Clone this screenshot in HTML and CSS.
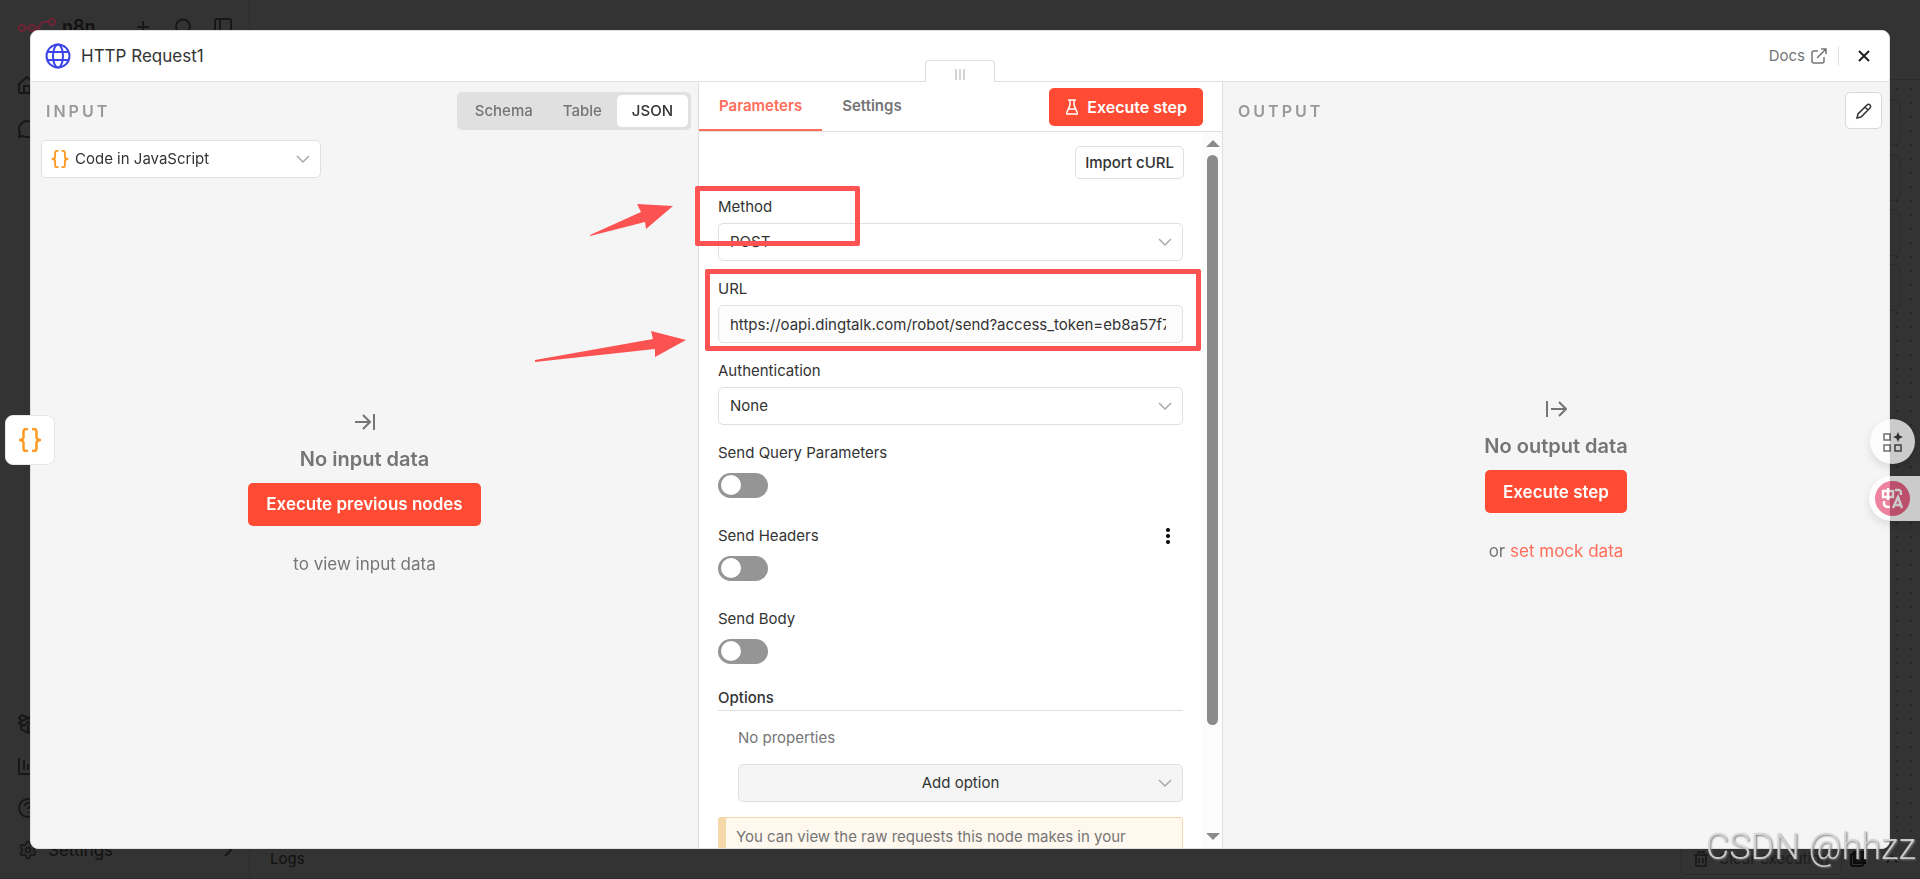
FILE: index.html
```html
<!DOCTYPE html>
<html lang="en">
<head>
    <meta charset="UTF-8">
    <meta name="viewport" content="width=device-width, initial-scale=1.0">
    <title>HTTP Request1 - n8n</title>
    <link rel="stylesheet" href="styles.css">
</head>
<body>

<!-- dimmed editor behind the dialog -->
<div class="editor">
    <aside class="sidebar">
        <div class="brand">
            <svg class="logo" width="40" height="24" viewBox="0 0 40 24">
                <g fill="none" stroke="#6b2438" stroke-width="2">
                    <circle cx="4" cy="13" r="3"/>
                    <circle cx="14" cy="13" r="3"/>
                    <circle cx="34" cy="7" r="3"/>
                    <circle cx="31" cy="19" r="3"/>
                    <path d="M7 13h4M17 13h2c4 0 2-6 7-6h5M19 13c4 0 2 6 7 6h2"/>
                </g>
            </svg>
            <span class="brand-name">n8n</span>
            <svg class="tool" width="18" height="18" viewBox="0 0 18 18"><path d="M9 3v12M3 9h12"/></svg>
            <svg class="tool" width="18" height="18" viewBox="0 0 18 18"><circle cx="9" cy="8.500" r="7"/><path d="M14 14l3 3"/></svg>
            <svg class="tool" width="18" height="18" viewBox="0 0 18 18"><rect x="1" y="1" width="16" height="16" rx="2"/><path d="M6 1v16"/></svg>
        </div>
        <nav class="side-nav">
            <svg class="tool" width="18" height="18" viewBox="0 0 18 18"><path d="M1 8l8-7 8 7v8a1 1 0 0 1-1 1H2a1 1 0 0 1-1-1zM6 17v-7h6v7"/></svg>
            <svg class="tool" width="18" height="18" viewBox="0 0 18 18"><path d="M1 17l1-4a8 8 0 1 1 3 3z"/></svg>
        </nav>
        <nav class="side-nav side-nav-bottom">
            <svg class="tool" width="20" height="20" viewBox="0 0 20 20"><path d="M3 9v6l7 4 7-4V9M10 11v8M10 4L4 1 1 4l3 3-3 2 5 3 4-4 4 4 5-3-3-2 3-3-3-3zM4 7l6-3 6 3"/></svg>
            <svg class="tool" width="20" height="20" viewBox="0 0 20 20"><path d="M1 2v15a1 1 0 0 0 1 1h16M6 4v10M10 8v6M14 5v9"/></svg>
            <svg class="tool" width="20" height="20" viewBox="0 0 20 20"><circle cx="10" cy="10" r="9"/><path d="M7 8c0-4 6-4 6-1 0 2-3 2-3 4M10 14v1"/></svg>
            <a class="side-link" href="#">
                <svg class="tool" width="20" height="20" viewBox="0 0 24 24"><path d="M12.200 2h-.4a2 2 0 0 0-2 2v.2a2 2 0 0 1-1 1.700l-.4.300a2 2 0 0 1-2 0l-.2-.1a2 2 0 0 0-2.700.7l-.2.400a2 2 0 0 0 .7 2.700l.2.100a2 2 0 0 1 1 1.700v.5a2 2 0 0 1-1 1.800l-.2.100a2 2 0 0 0-.7 2.700l.2.400a2 2 0 0 0 2.700.7l.2-.1a2 2 0 0 1 2 0l.4.300a2 2 0 0 1 1 1.700v.2a2 2 0 0 0 2 2h.4a2 2 0 0 0 2-2v-.2a2 2 0 0 1 1-1.700l.4-.3a2 2 0 0 1 2 0l.2.100a2 2 0 0 0 2.700-.7l.2-.4a2 2 0 0 0-.7-2.700l-.2-.1a2 2 0 0 1-1-1.800v-.5a2 2 0 0 1 1-1.700l.2-.1a2 2 0 0 0 .7-2.700l-.2-.4a2 2 0 0 0-2.700-.7l-.2.100a2 2 0 0 1-2 0l-.4-.3a2 2 0 0 1-1-1.700V4a2 2 0 0 0-2-2z"/><circle cx="12" cy="12" r="3"/></svg>
                <span>Settings</span>
                <svg class="tool side-arrow" width="8" height="16" viewBox="0 0 8 16"><path d="M1 2l6 6-6 6"/></svg>
            </a>
        </nav>
    </aside>
    <main class="workspace">
        <div class="top-bar"></div>
        <div class="canvas">
            <div class="canvas-tools">
                <span></span><span></span><span></span><span></span>
            </div>
        </div>
        <div class="log-bar">
            <span class="log-title">Logs</span>
            <button type="button" class="clear-btn">
                <svg width="14" height="16" viewBox="0 0 14 16"><path d="M0 4h14M2 4v10a1 1 0 0 0 1 1h8a1 1 0 0 0 1-1V4M4 4V1h6v3M5 7v5M9 7v5"/></svg>
                Clear execution
            </button>
            <svg class="tool dark" width="16" height="16" viewBox="0 0 16 16"><rect x="1" y="3" width="12" height="12" rx="2"/><path class="solid" d="M4 1h9a2 2 0 0 1 2 2v9H4z"/></svg>
            <svg class="tool dark" width="12" height="12" viewBox="0 0 12 12"><path d="M1 9l5-5 5 5"/></svg>
        </div>
    </main>
</div>

<div class="modal">
    <header class="modal-header">
        <svg class="globe" width="26" height="26" viewBox="0 0 26 26"><circle cx="13" cy="13" r="11.500"/><ellipse cx="13" cy="13" rx="5" ry="11.500"/><path d="M2 9h22M2 17h22"/></svg>
        <h1>HTTP Request1</h1>
        <a class="docs" href="#">Docs
            <svg width="16" height="16" viewBox="0 0 16 16"><path d="M7 3H3a2 2 0 0 0-2 2v8a2 2 0 0 0 2 2h8a2 2 0 0 0 2-2V9M10 1h5v5M15 1L6 10"/></svg>
        </a>
        <button type="button" class="close" aria-label="Close">
            <svg width="12" height="12" viewBox="0 0 12 12"><path d="M1 1l10 10M11 1L1 11"/></svg>
        </button>
    </header>

    <section class="panel">
        <div class="panel-header">
            <h2>Input</h2>
            <div class="view-tabs">
                <button type="button">Schema</button>
                <button type="button">Table</button>
                <button type="button" class="active">JSON</button>
            </div>
        </div>
        <div class="select node-select">
            <svg class="braces" width="18" height="18" viewBox="0 0 24 24"><path d="M10 1H8a2.500 2.500 0 0 0-2.500 2.500V9c0 2-1.500 3-4.500 3 3 0 4.500 1 4.500 3v5.500A2.500 2.500 0 0 0 8 23h2M14 1h2a2.500 2.500 0 0 1 2.500 2.500V9c0 2 1.500 3 4.500 3-3 0-4.500 1-4.500 3v5.500A2.500 2.500 0 0 1 16 23h-2"/></svg>
            <select aria-label="Input node"><option>Code in JavaScript</option></select>
            <svg class="chevron" width="14" height="8" viewBox="0 0 14 8"><path d="M1 1l6 6 6-6"/></svg>
        </div>
        <div class="empty">
            <svg class="flow-icon" width="22" height="18" viewBox="0 0 22 18"><path d="M1 9h15M9 2l7 7-7 7M20 1v16"/></svg>
            <h3>No input data</h3>
            <button type="button" class="primary large">Execute previous nodes</button>
            <p>to view input data</p>
        </div>
    </section>

    <section class="params">
        <div class="drag-handle"><i></i><i></i><i></i></div>
        <div class="tabs">
            <button type="button" class="tab active">Parameters</button>
            <button type="button" class="tab">Settings</button>
            <button type="button" class="primary">
                <svg width="12" height="16" viewBox="0 0 12 16"><path d="M2 1h8M4 1v5L1 13a1 1 0 0 0 1 2h8a1 1 0 0 0 1-2L8 6V1M3 10h6"/></svg>
                Execute step
            </button>
        </div>
        <div class="scroll-area">
            <form class="form">
                <button type="button" class="import-btn">Import cURL</button>

                <div class="field">
                    <label for="method">Method</label>
                    <div class="select">
                        <select id="method"><option>POST</option></select>
                        <svg class="chevron" width="14" height="8" viewBox="0 0 14 8"><path d="M1 1l6 6 6-6"/></svg>
                    </div>
                </div>
                <div class="field">
                    <label for="url">URL</label>
                    <input type="text" id="url" value="https://oapi.dingtalk.com/robot/send?access_token=eb8a57f7">
                </div>
                <div class="field">
                    <label for="auth">Authentication</label>
                    <div class="select">
                        <select id="auth"><option>None</option></select>
                        <svg class="chevron" width="14" height="8" viewBox="0 0 14 8"><path d="M1 1l6 6 6-6"/></svg>
                    </div>
                </div>

                <div class="toggle">
                    <label for="sendQuery">Send Query Parameters</label>
                    <input type="checkbox" id="sendQuery">
                </div>
                <div class="toggle">
                    <label for="sendHeaders">Send Headers</label>
                    <button type="button" class="more" aria-label="More">
                        <svg width="6" height="18" viewBox="0 0 6 18"><circle cx="3" cy="3" r="2"/><circle cx="3" cy="9" r="2"/><circle cx="3" cy="15" r="2"/></svg>
                    </button>
                    <input type="checkbox" id="sendHeaders">
                </div>
                <div class="toggle">
                    <label for="sendBody">Send Body</label>
                    <input type="checkbox" id="sendBody">
                </div>

                <h4>Options</h4>
                <div class="options">
                    <p>No properties</p>
                    <div class="select add-option">
                        <select aria-label="Add option"><option>Add option</option></select>
                        <svg class="chevron" width="14" height="8" viewBox="0 0 14 8"><path d="M1 1l6 6 6-6"/></svg>
                    </div>
                </div>
                <div class="notice">You can view the raw requests this node makes in your</div>
            </form>
            <div class="scrollbar">
                <svg width="14" height="7" viewBox="0 0 14 7"><path d="M0 7l7-7 7 7z"/></svg>
                <div class="track"><div class="thumb"></div></div>
                <svg width="14" height="7" viewBox="0 0 14 7"><path d="M0 0l7 7 7-7z"/></svg>
            </div>
        </div>
    </section>

    <section class="panel output">
        <div class="panel-header">
            <h2>Output</h2>
            <button type="button" class="edit" aria-label="Edit output">
                <svg width="16" height="16" viewBox="0 0 16 16"><path d="M1 15l1-4 9-9a2.100 2.100 0 0 1 3 3l-9 9zM9 4l3 3"/></svg>
            </button>
        </div>
        <div class="empty">
            <svg class="flow-icon" width="22" height="18" viewBox="0 0 22 18"><path d="M2 1v16M6 9h15M14 2l7 7-7 7"/></svg>
            <h3>No output data</h3>
            <button type="button" class="primary large">Execute step</button>
            <p>or <a href="#">set mock data</a></p>
        </div>
    </section>
</div>

<!-- floating shortcuts -->
<button type="button" class="prev-node" aria-label="Code in JavaScript">
    <svg class="braces" width="24" height="24" viewBox="0 0 24 24"><path d="M10 1H8a2.500 2.500 0 0 0-2.500 2.500V9c0 2-1.500 3-4.500 3 3 0 4.500 1 4.500 3v5.500A2.500 2.500 0 0 0 8 23h2M14 1h2a2.500 2.500 0 0 1 2.500 2.500V9c0 2 1.500 3 4.500 3-3 0-4.500 1-4.500 3v5.500A2.500 2.500 0 0 1 16 23h-2"/></svg>
</button>
<div class="helpers">
    <button type="button" class="helper" aria-label="Apps">
        <svg width="20" height="20" viewBox="0 0 20 20"><path fill="none" stroke="#444" stroke-width="1.500" d="M1 2h6v6H1zM1 13h6v6H1zM12 13h6v6h-6z"/><path fill="#333" d="M15 0l1.500 3.500L20 5l-3.500 1.500L15 10l-1.500-3.500L10 5l3.500-1.500z"/></svg>
    </button>
    <button type="button" class="helper translate" aria-label="Translate">
        <svg width="35" height="35" viewBox="0 0 35 35"><circle cx="17.500" cy="17.500" r="17.500" fill="#e95b80"/><path fill="none" stroke="#fff" stroke-width="2.400" d="M8 10h10v6H8zM13 7v12M20 9h4q2 0 2 5M9 20v3q0 3 6 3M18 27l5-11 4 11M20 24h6"/></svg>
    </button>
</div>

<!-- markup drawn over the form -->
<div class="mark mark-method"></div>
<div class="mark mark-url"></div>
<svg class="arrow arrow-method" width="84" height="34" viewBox="0 0 84 34"><path d="M0 31l51-23-4-8 36 2-27 23-1-7L0 32z"/></svg>
<svg class="arrow arrow-url" width="152" height="32" viewBox="0 0 152 32"><path d="M0 29L118 8l-2-8 35 9-31 17v-8L0 31z"/></svg>
<div class="watermark">CSDN @hhzz</div>

</body>
</html>
```

FILE: styles.css
```css
* {
    box-sizing: border-box;
}
body {
    margin: 0;
    height: 100vh;
    overflow: hidden;
    position: relative;
    background-color: #333;
    color: #333;
    font-family: Inter, "Liberation Sans", sans-serif;
    font-size: 15px;
    line-height: 20px;
}
h1, h2, h3, h4, p {
    margin: 0;
}
button, input, select {
    font: inherit;
    color: inherit;
    margin: 0;
}
button {
    border: none;
    background: none;
    padding: 0;
    cursor: pointer;
}
a {
    text-decoration: none;
    color: inherit;
}
svg {
    flex: none;
    display: block;
}

/* editor background */
.editor {
    display: flex;
    height: 100%;
    color: #111;
    border-bottom: 1px solid #2b2b2b;
}
.sidebar {
    width: 250px;
    border-right: 1px solid #2b2b2b;
    display: flex;
    flex-direction: column;
    padding: 14px 17px 18px 18px;
}
.tool {
    fill: none;
    stroke: #171717;
    stroke-width: 2;
}
.tool .solid {
    fill: #111;
}
.dark {
    stroke: #0c0c0c;
}
.brand {
    display: flex;
    align-items: center;
    height: 26px;
}
.brand-name {
    font-size: 18px;
    font-weight: 600;
    margin: 0 auto 0 4px;
}
.brand .tool {
    margin-left: 22px;
}
.side-nav {
    display: flex;
    flex-direction: column;
    gap: 26px;
    padding-top: 36px;
}
.side-nav-bottom {
    margin-top: auto;
    gap: 22px;
}
.side-link {
    display: flex;
    align-items: center;
    gap: 10px;
    font-size: 17px;
}
.side-arrow {
    margin-left: auto;
}
.workspace {
    flex: 1;
    display: flex;
    flex-direction: column;
}
.top-bar {
    height: 80px;
    border-bottom: 1px solid #2b2b2b;
}
.canvas {
    flex: 1;
    background-image: radial-gradient(#262626 1px, transparent 1px);
    background-size: 14px 14px;
    background-position: 2px 2px;
    border-bottom: 1px solid #2b2b2b;
}
.canvas-tools {
    display: flex;
    flex-direction: column;
    align-items: flex-end;
    gap: 8px;
    padding: 19px 19px 0 0;
}
.canvas-tools span {
    width: 47px;
    height: 47px;
    border: 1px solid #2a2a2a;
    border-radius: 8px;
    background-color: #323232;
}
.log-bar {
    height: 38px;
    display: flex;
    align-items: center;
    padding: 0 22px 0 20px;
}
.log-title {
    margin-right: auto;
}
.clear-btn {
    display: flex;
    align-items: center;
    gap: 10px;
    height: 32px;
    padding: 0 12px;
    margin-right: 8px;
    border: 1px solid #2a2a2a;
    border-radius: 5px;
    color: #1c1c1c;
}
.clear-btn svg {
    fill: none;
    stroke: #1c1c1c;
    stroke-width: 2;
}
.log-bar .dark + .dark {
    margin-left: 20px;
}

/* dialog */
.modal {
    position: fixed;
    inset: 30px;
    display: grid;
    grid-template-columns: 1fr 524px 1fr;
    grid-template-rows: 51px 1fr;
    border: 1px solid #e0e0e0;
    border-radius: 8px;
    background-color: #f5f5f5;
    overflow: hidden;
}
.modal-header {
    grid-column: 1 / -1;
    display: flex;
    align-items: center;
    padding: 0 19px 0 14px;
    background-color: #fff;
    border-bottom: 1px solid #e0e0e0;
}
.globe {
    fill: none;
    stroke: #3b44e8;
    stroke-width: 2;
}
.modal-header h1 {
    font-size: 17px;
    font-weight: 400;
    margin: 0 auto 0 10px;
}
.docs {
    display: flex;
    align-items: center;
    gap: 6px;
    padding-right: 11px;
    border-right: 1px solid #e0e0e0;
    color: #757575;
}
.docs svg {
    fill: none;
    stroke: #757575;
    stroke-width: 1.5;
}
.close {
    margin-left: 19px;
}
.close svg {
    fill: none;
    stroke: #222;
    stroke-width: 2;
}
.panel {
    display: flex;
    flex-direction: column;
    min-height: 0;
    color: #757575;
}
.panel-header {
    display: flex;
    align-items: center;
    justify-content: space-between;
    padding: 10px 7px 10px 15px;
}
.panel-header h2 {
    font-size: 16px;
    font-weight: 600;
    letter-spacing: 3px;
    text-transform: uppercase;
    color: #999;
}
.view-tabs {
    display: flex;
    padding: 3px;
    border-radius: 5px;
    background-color: #e0e0e0;
}
.view-tabs button {
    height: 32px;
    padding: 0 15px;
    border-radius: 5px;
    font-weight: 500;
}
.view-tabs .active {
    background-color: #fff;
    color: #333;
}
.empty {
    flex: 1;
    display: flex;
    flex-direction: column;
    align-items: center;
    justify-content: center;
    padding-bottom: 38px;
    font-size: 17px;
    line-height: 24px;
}
.empty h3 {
    margin: 16px 0 12px;
    font-size: 20px;
    font-weight: 600;
}
.empty p {
    margin-top: 26px;
}
.empty a {
    color: #ff6d5a;
}
.flow-icon {
    fill: none;
    stroke: #757575;
    stroke-width: 2;
}
.output {
    border-left: 1px solid #e0e0e0;
}
.output .empty {
    padding-bottom: 24px;
}
.edit {
    display: flex;
    align-items: center;
    justify-content: center;
    width: 37px;
    height: 37px;
    border: 1px solid #d9d9d9;
    border-radius: 5px;
    background-color: #fff;
}
.edit svg {
    fill: none;
    stroke: #333;
    stroke-width: 1.5;
}

/* buttons */
.primary {
    display: flex;
    align-items: center;
    gap: 9px;
    height: 38px;
    padding: 0 16px 0 17px;
    border-radius: 5px;
    background-color: #ff4b33;
    color: #fff;
    font-size: 16px;
    font-weight: 600;
}
.primary svg {
    fill: none;
    stroke: #fff;
    stroke-width: 1.5;
}
.large {
    height: 43px;
    padding: 0 18px;
    font-size: 17px;
}

/* parameters */
.params {
    position: relative;
    display: flex;
    flex-direction: column;
    min-height: 0;
    background-color: #fff;
    border-left: 1px solid #e0e0e0;
}
.drag-handle {
    position: absolute;
    bottom: 100%;
    left: 50%;
    display: flex;
    justify-content: center;
    gap: 2px;
    width: 70px;
    height: 22px;
    margin-left: -36px;
    padding-top: 8px;
    border: 1px solid #e0e0e0;
    border-bottom: none;
    border-radius: 4px 4px 0 0;
    background-color: #fff;
}
.drag-handle i {
    width: 2px;
    height: 11px;
    background-color: #d5d5d5;
}
.tabs {
    display: flex;
    height: 50px;
    padding-right: 19px;
    border-bottom: 1px solid #e0e0e0;
}
.tab {
    padding: 0 20px;
    font-weight: 600;
    color: #757575;
    border-bottom: 2px solid transparent;
}
.tab.active {
    border-bottom-color: #ff6d5a;
    color: #ff6d5a;
}
.tabs .primary {
    margin: 6px 0 0 auto;
}
.scroll-area {
    flex: 1;
    display: flex;
    min-height: 0;
}
.form {
    flex: 1;
    padding: 14px 20px 0 19px;
    overflow: hidden;
}
.import-btn {
    display: block;
    height: 33px;
    margin: 0 -1px 18px auto;
    padding: 0 9px;
    border: 1px solid #e0e0e0;
    border-radius: 5px;
    font-weight: 500;
}
.field {
    margin-bottom: 18px;
}
.field label {
    display: block;
    margin-bottom: 6px;
}
.select {
    position: relative;
}
.select select, .field input {
    display: block;
    width: 100%;
    height: 38px;
    padding: 0 16px 0 11px;
    border: 1px solid #e0e0e0;
    border-radius: 5px;
    background-color: #fff;
    appearance: none;
}
.field input {
    background-color: #fcfcfc;
}
.chevron {
    position: absolute;
    right: 11px;
    top: 15px;
    fill: none;
    stroke: #aaa;
    stroke-width: 1.5;
    pointer-events: none;
}
.node-select {
    width: 280px;
    margin-left: 10px;
    color: #333;
}
.node-select select {
    padding-left: 33px;
}
.braces {
    fill: none;
    stroke: #ff9922;
    stroke-width: 2.5;
}
.node-select .braces {
    position: absolute;
    left: 10px;
    top: 10px;
}
.toggle {
    display: grid;
    grid-template-columns: 1fr auto;
    row-gap: 10px;
    margin-bottom: 28px;
}
.toggle:nth-of-type(6) {
    margin-bottom: 24px;
}
.toggle input {
    grid-row: 2;
    width: 50px;
    height: 25px;
    padding: 2px 3px;
    border-radius: 13px;
    background-color: #959595;
    appearance: none;
}
.toggle input::before {
    content: "";
    display: block;
    width: 20px;
    height: 20px;
    border-radius: 50%;
    background-color: #fff;
}
.more {
    margin-right: 12px;
}
h4 {
    padding-bottom: 2px;
    border-bottom: 1px solid #e0e0e0;
    font-size: 15px;
    font-weight: 500;
}
.options {
    padding: 17px 0 15px 20px;
}
.options p {
    margin-bottom: 16px;
    color: #757575;
}
.add-option select {
    background-color: #f5f5f5;
    text-align-last: center;
    padding: 0 11px;
}
.notice {
    height: 60px;
    padding: 9px 10px;
    border: 1px solid #f5d7a8;
    border-left-width: 8px;
    border-radius: 3px;
    background-color: #fff8ee;
    color: #757575;
}
.scrollbar {
    width: 19px;
    display: flex;
    flex-direction: column;
    align-items: center;
    gap: 8px;
    padding: 8px 0;
    background-color: #fcfcfc;
    fill: #8b8b8b;
}
.track {
    flex: 1;
}
.thumb {
    width: 11px;
    height: 85%;
    border-radius: 6px;
    background-color: #8b8b8b;
}

/* floating items */
.prev-node {
    position: fixed;
    left: 5px;
    top: 415px;
    display: flex;
    align-items: center;
    justify-content: center;
    width: 50px;
    height: 50px;
    border: 1px solid #e6e6e6;
    border-radius: 8px;
    background-color: #fff;
}
.helpers {
    position: fixed;
    right: 0;
    top: 419px;
    display: flex;
    flex-direction: column;
    align-items: flex-end;
    gap: 12px;
}
.helper {
    display: flex;
    align-items: center;
    justify-content: center;
    width: 45px;
    height: 45px;
    margin-right: 5px;
    border-radius: 50%;
    background-color: #fff;
    box-shadow: 0 4px 10px rgba(0, 0, 0, 0.15);
    opacity: 0.75;
}
.translate {
    justify-content: flex-start;
    width: 51px;
    margin-right: 0;
    padding-left: 6px;
    border-radius: 23px 0 0 23px;
}
.mark {
    position: absolute;
    border: 5px solid #fc5252;
    border-radius: 2px;
}
.mark-method {
    left: 695px;
    top: 186px;
    width: 165px;
    height: 60px;
}
.mark-url {
    left: 705px;
    top: 269px;
    width: 496px;
    height: 82px;
}
.arrow {
    position: absolute;
    fill: #fc5252;
}
.arrow-method {
    left: 590px;
    top: 204px;
}
.arrow-url {
    left: 535px;
    top: 331px;
}
.watermark {
    position: absolute;
    right: 4px;
    bottom: 12px;
    font-family: Roboto, sans-serif;
    font-size: 36px;
    font-weight: 300;
    line-height: 40px;
    color: rgba(215, 215, 215, 0.9);
    text-shadow: 1px 1px 2px #777;
}
```
